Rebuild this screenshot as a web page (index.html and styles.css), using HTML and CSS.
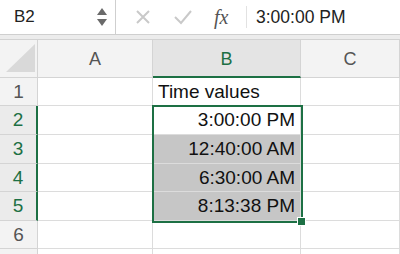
FILE: index.html
```html
<!DOCTYPE html>
<html lang="en">
<head>
    <meta charset="UTF-8">
    <title>Time values</title>
    <link rel="stylesheet" href="styles.css">
</head>
<body>
    <div class="formula-bar">
        <div class="name-box">
            <span>B2</span>
            <div class="spinner">
                <span class="up"></span>
                <span class="down"></span>
            </div>
        </div>
        <div class="bar-btn cancel">
            <svg width="16" height="16" viewBox="0 0 16 16"><path d="M2 2L14 14M14 2L2 14" stroke="#c9c9c9" stroke-width="2" fill="none"/></svg>
        </div>
        <div class="bar-btn">
            <svg width="20" height="16" viewBox="0 0 20 16"><path d="M2 8L8 14L18 2" stroke="#c9c9c9" stroke-width="2" fill="none"/></svg>
        </div>
        <div class="fx">fx</div>
        <div class="formula-value">3:00:00 PM</div>
    </div>
    <div class="bar-gap"></div>

    <div class="sheet">
        <div class="hd corner"><span class="tri"></span></div>
        <div class="hd col">A</div>
        <div class="hd col sel">B</div>
        <div class="hd col">C</div>

        <div class="hd row">1</div>
        <div class="cell"></div>
        <div class="cell">Time values</div>
        <div class="cell"></div>

        <div class="hd row sel">2</div>
        <div class="cell"></div>
        <div class="cell num">3:00:00 PM</div>
        <div class="cell"></div>

        <div class="hd row sel">3</div>
        <div class="cell"></div>
        <div class="cell num shade">12:40:00 AM</div>
        <div class="cell"></div>

        <div class="hd row sel">4</div>
        <div class="cell"></div>
        <div class="cell num shade">6:30:00 AM</div>
        <div class="cell"></div>

        <div class="hd row sel">5</div>
        <div class="cell"></div>
        <div class="cell num shade">8:13:38 PM</div>
        <div class="cell"></div>

        <div class="hd row">6</div>
        <div class="cell"></div>
        <div class="cell"></div>
        <div class="cell"></div>

        <div class="hd row"></div>
        <div class="cell"></div>
        <div class="cell"></div>
        <div class="cell"></div>

        <div class="selection"><span class="handle"></span></div>
    </div>
</body>
</html>
```

FILE: styles.css
```css
body {
    margin: 0;
    width: 400px;
    height: 254px;
    overflow: hidden;
    background-color: #fff;
    font-family: "Liberation Sans", Arial, sans-serif;
    color: #222;
}
.formula-bar {
    display: flex;
    align-items: center;
    height: 34px;
    border-bottom: 1px solid #cfcfcf;
    background-color: #fff;
}
.name-box {
    display: flex;
    align-items: center;
    width: 101px;
    height: 100%;
    padding-left: 14px;
    border-right: 1px solid #cfcfcf;
    font-size: 17px;
}
.spinner {
    display: flex;
    flex-direction: column;
    gap: 4px;
    margin-left: auto;
    margin-right: 8px;
}
.spinner span {
    width: 0;
    height: 0;
    border-left: 5px solid transparent;
    border-right: 5px solid transparent;
}
.spinner .up {
    border-bottom: 7px solid #6a6a6a;
}
.spinner .down {
    border-top: 7px solid #6a6a6a;
}
.bar-btn {
    display: flex;
    justify-content: center;
    width: 40px;
}
.cancel {
    margin-left: 7px;
}
.fx {
    width: 26px;
    margin-left: 11px;
    padding-right: 6px;
    border-right: 1px solid #e2e2e2;
    font-family: "Liberation Serif", serif;
    font-style: italic;
    font-size: 20px;
    color: #555;
    line-height: 22px;
}
.formula-value {
    margin-left: 9px;
    font-size: 17.5px;
}
.bar-gap {
    height: 4px;
    background-color: #ececec;
    border-bottom: 1px solid #d2d2d2;
}
.sheet {
    position: relative;
    display: grid;
    grid-template-columns: 38px 115px 148px 99px;
    grid-template-rows: 38px 28px 29px 29px 28px 29px 28px 14px;
}
.hd {
    display: flex;
    align-items: center;
    justify-content: center;
    box-sizing: border-box;
    background-color: #f3f3f3;
    border-right: 1px solid #d4d4d4;
    border-bottom: 1px solid #d4d4d4;
    font-size: 18px;
    color: #555;
}
.corner {
    position: relative;
}
.tri {
    position: absolute;
    left: 6px;
    bottom: 5px;
    width: 0;
    height: 0;
    border-left: 29px solid transparent;
    border-bottom: 28px solid #d9d9d9;
}
.col {
    padding-top: 2px;
}
.row {
    font-size: 19px;
}
.col.sel {
    background-color: #e4e4e4;
    border-bottom: 2px solid #1d7044;
    color: #1d7044;
}
.row.sel {
    background-color: #ebebeb;
    border-right: 2px solid #1d7044;
    color: #1d7044;
}
.cell {
    box-sizing: border-box;
    display: flex;
    align-items: center;
    padding: 0 5px;
    border-right: 1px solid #dcdcdc;
    border-bottom: 1px solid #dcdcdc;
    font-size: 19px;
    color: #111;
    white-space: nowrap;
}
.num {
    justify-content: flex-end;
}
.shade {
    background-color: #c6c6c6;
}
.selection {
    position: absolute;
    left: 152px;
    top: 65px;
    width: 147px;
    height: 114px;
    border: 2px solid #1d7044;
}
.handle {
    position: absolute;
    right: -5px;
    bottom: -5px;
    width: 7px;
    height: 7px;
    background-color: #1d7044;
    border: 1px solid #fff;
}
```
